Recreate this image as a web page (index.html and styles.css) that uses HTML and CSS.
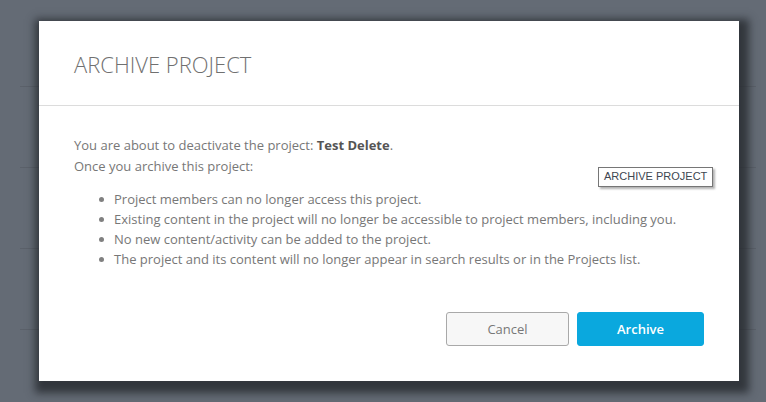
FILE: index.html
```html
<!DOCTYPE html>
<html>
<head>
<meta charset="utf-8">
<link rel="stylesheet" href="styles.css">
</head>
<body>
<div class="page">
  <div class="row"></div>
  <div class="row"></div>
  <div class="row"></div>
  <div class="row"></div>
</div>
<div class="modal">
  <div class="modal-header">
    <h1 class="modal-title">ARCHIVE PROJECT</h1>
  </div>
  <div class="modal-body">
    <p class="intro">You are about to deactivate the project: <strong>Test Delete</strong>.<br>Once you archive this project:</p>
    <ul class="effects">
      <li>Project members can no longer access this project.</li>
      <li>Existing content in the project will no longer be accessible to project members, including you.</li>
      <li>No new content/activity can be added to the project.</li>
      <li>The project and its content will no longer appear in search results or in the Projects list.</li>
    </ul>
  </div>
  <div class="modal-footer">
    <button class="btn btn-cancel">Cancel</button>
    <button class="btn btn-primary">Archive</button>
  </div>
  <div class="tooltip">ARCHIVE PROJECT</div>
</div>
</body>
</html>
```

FILE: styles.css
```css
html, body {
  margin: 0;
  padding: 0;
}
body {
  width: 766px;
  height: 402px;
  background: #646b75;
  overflow: hidden;
  font-family: "Open Sans", "Liberation Sans", sans-serif;
  position: relative;
}
.page {
  padding: 6px 10px 0 20px;
  display: flex;
  flex-direction: column;
}
.row {
  height: 81px;
  border-bottom: 1px solid #5b616a;
  box-sizing: border-box;
}
.modal {
  position: absolute;
  left: 39px;
  top: 21px;
  width: 700px;
  height: 360px;
  background: #fff;
  box-shadow: 3px 5px 8px 7px rgba(38, 41, 46, 0.8);
  display: flex;
  flex-direction: column;
}
.modal-header {
  height: 84px;
  border-bottom: 1px solid #dcdcdc;
  display: flex;
  align-items: center;
  padding-left: 35px;
}
.modal-title {
  margin: 0;
  padding-top: 2px;
  font-size: 22px;
  font-weight: 300;
  color: #707070;
  letter-spacing: 0;
}
.modal-body {
  padding: 29px 35px 0 35px;
  font-size: 13px;
  color: #777;
  flex: 1;
}
.intro {
  margin: 0;
  line-height: 21px;
}
.intro strong {
  color: #555;
  font-weight: 700;
}
.effects {
  margin: 12px 0 0 0;
  padding-left: 40px;
  line-height: 20px;
  list-style: none;
}
.effects li {
  position: relative;
}
.effects li::before {
  content: "";
  position: absolute;
  left: -15px;
  top: 8px;
  width: 5px;
  height: 5px;
  border-radius: 50%;
  background: #808080;
}
.modal-footer {
  display: flex;
  justify-content: flex-end;
  gap: 8px;
  padding: 0 35px 35px 0;
}
.btn {
  height: 34px;
  border-radius: 3px;
  font-family: "Open Sans", "Liberation Sans", sans-serif;
  font-size: 13px;
  cursor: pointer;
}
.btn-cancel {
  width: 123px;
  background: #f7f7f7;
  border: 1px solid #a9a9a9;
  color: #777;
}
.btn-primary {
  width: 127px;
  background: #0aa8de;
  border: 1px solid #0aa8de;
  color: #fff;
  font-weight: 600;
}
.tooltip {
  position: absolute;
  left: 559px;
  top: 146px;
  padding: 1px 5px 2px 5px;
  border: 1px solid #767676;
  background: #fff;
  color: #404650;
  font-family: "Liberation Sans", sans-serif;
  font-size: 11px;
  line-height: 15px;
  box-shadow: 2px 2px 2px rgba(0, 0, 0, 0.3);
}
```
